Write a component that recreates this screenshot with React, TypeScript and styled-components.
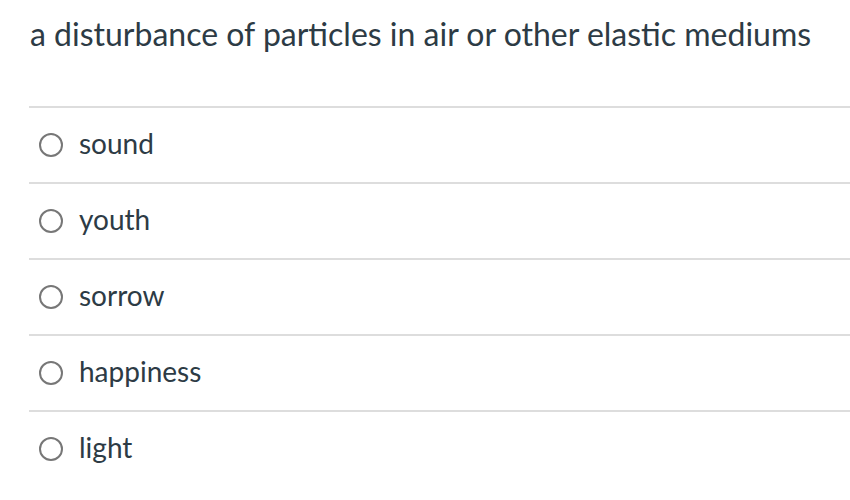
import React from "react";
import styled, {createGlobalStyle} from "styled-components";

const GlobalStyle = createGlobalStyle`
  body {
    margin: 0;
    background: #ffffff;
    font-family: Lato, "Liberation Sans", sans-serif;
    color: #2d3b45;
  }
`;

const Page = styled.div`
  padding: 12px 0 0 29px;
`;

const Question = styled.div`
  font-size: 32px;
  line-height: 44px;
  padding-left: 1px;
  margin-bottom: 50px;
`;

const AnswerList = styled.div`
  display: flex;
  flex-direction: column;
`;

const AnswerRow = styled.label`
  display: flex;
  align-items: center;
  gap: 16px;
  height: 74px;
  padding-left: 10px;
  border-top: 2px solid #dddddd;
  font-size: 28px;
  cursor: pointer;
`;

const Radio = styled.span`
  width: 20px;
  height: 20px;
  border-radius: 50%;
  border: 2px solid #777777;
  flex-shrink: 0;
`;

const AnswerText = styled.span`
  margin-bottom: 5px;
`;

const answers = ["sound", "youth", "sorrow", "happiness", "light"];

const App: React.FC = () => {
    return (
        <>
            <GlobalStyle/>
            <Page>
                <Question>a disturbance of particles in air or other elastic mediums</Question>
                <AnswerList>
                    {answers.map(answer => (
                        <AnswerRow key={answer}>
                            <Radio/>
                            <AnswerText>{answer}</AnswerText>
                        </AnswerRow>
                    ))}
                </AnswerList>
            </Page>
        </>
    );
};

export default App;
